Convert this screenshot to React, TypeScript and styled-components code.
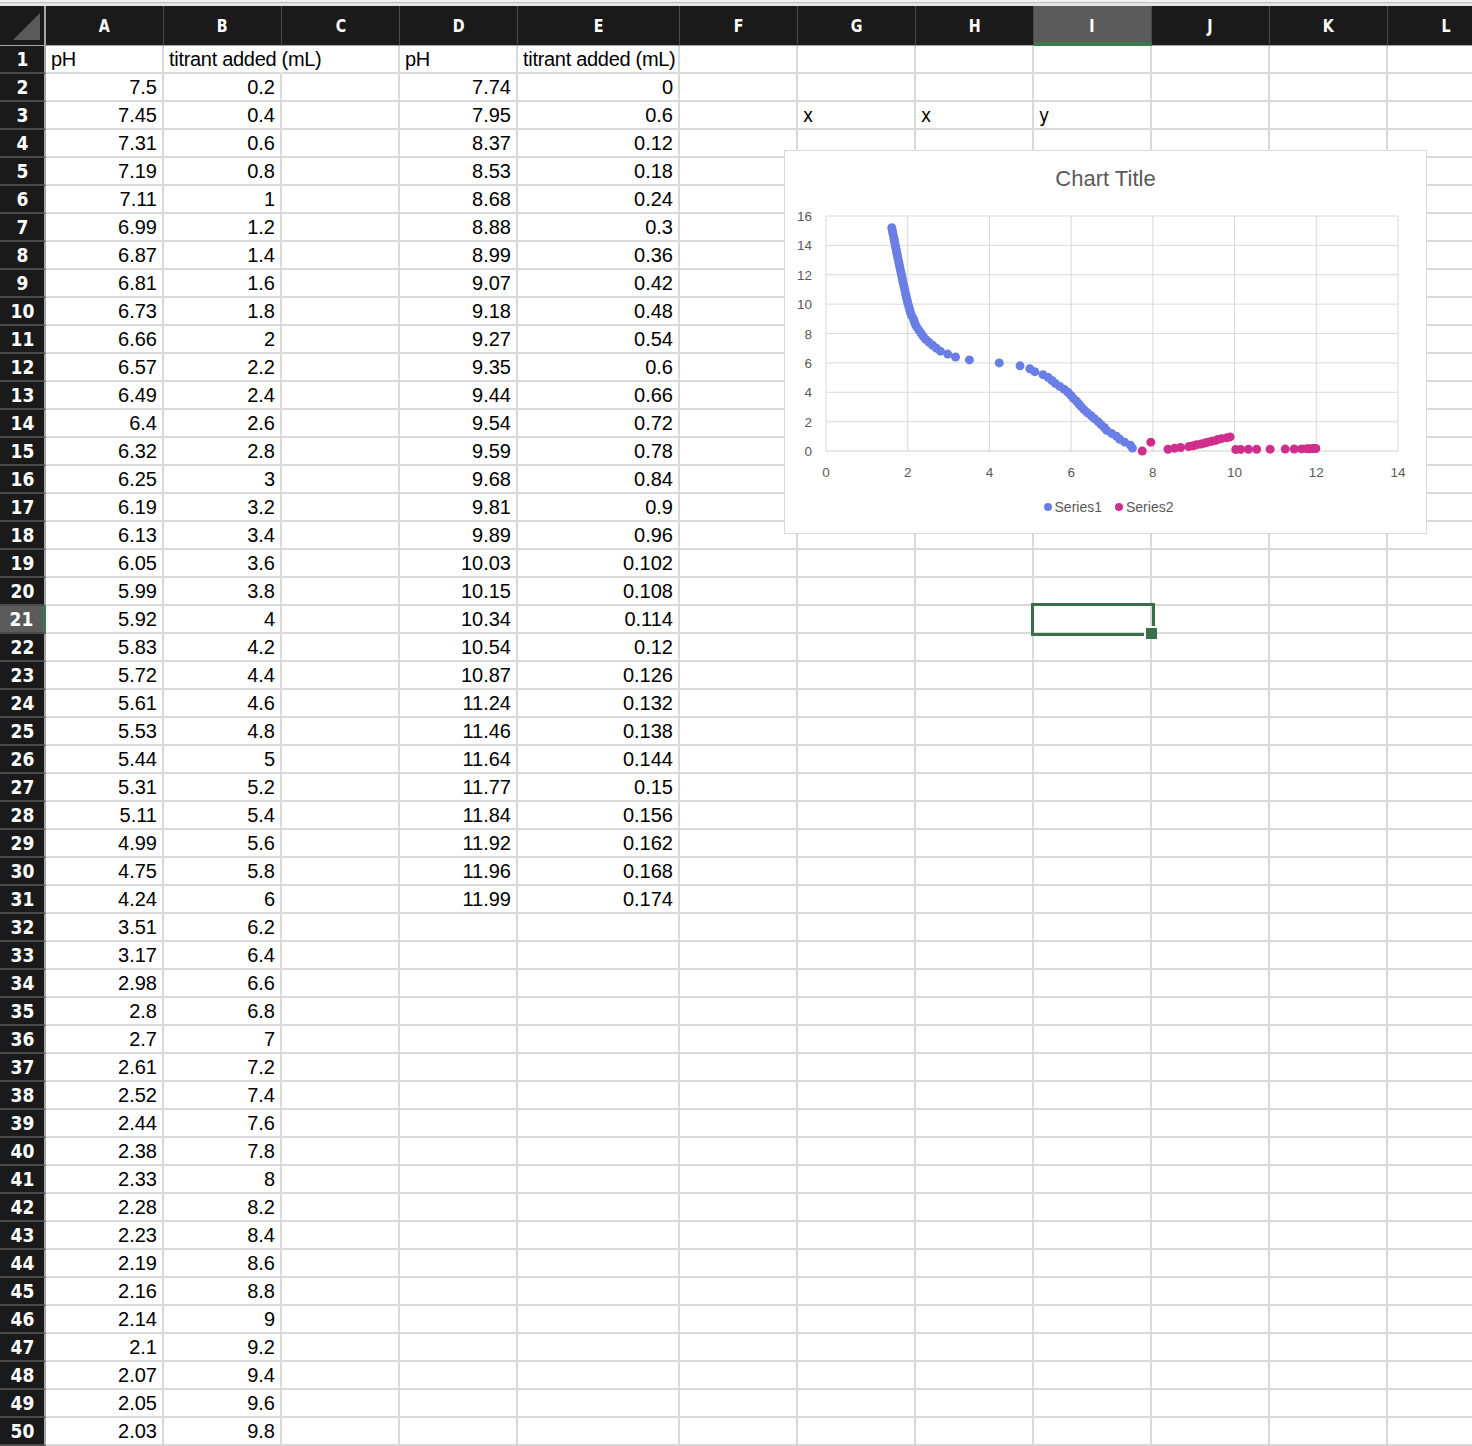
import React from "react";
import styled, { createGlobalStyle } from "styled-components";

const GlobalStyle = createGlobalStyle`
  html, body { margin: 0; padding: 0; background: #ffffff; }
  body { font-family: "Liberation Sans", Arial, sans-serif; overflow: hidden; }
`;

const COLS = ["A", "B", "C", "D", "E", "F", "G", "H", "I", "J", "K", "L"];
const COL_W = [118, 118, 118, 118, 162, 118, 118, 118, 118, 118, 118, 118];
const ROWS = 50;
const SEL_COL = "I";
const SEL_ROW = 21;

const A = [7.5, 7.45, 7.31, 7.19, 7.11, 6.99, 6.87, 6.81, 6.73, 6.66, 6.57, 6.49, 6.4, 6.32, 6.25, 6.19, 6.13, 6.05, 5.99, 5.92, 5.83, 5.72, 5.61, 5.53, 5.44, 5.31, 5.11, 4.99, 4.75, 4.24, 3.51, 3.17, 2.98, 2.8, 2.7, 2.61, 2.52, 2.44, 2.38, 2.33, 2.28, 2.23, 2.19, 2.16, 2.14, 2.1, 2.07, 2.05, 2.03];
const B = A.map((_, i) => Math.round((i + 1) * 2) / 10);
const D = [7.74, 7.95, 8.37, 8.53, 8.68, 8.88, 8.99, 9.07, 9.18, 9.27, 9.35, 9.44, 9.54, 9.59, 9.68, 9.81, 9.89, 10.03, 10.15, 10.34, 10.54, 10.87, 11.24, 11.46, 11.64, 11.77, 11.84, 11.92, 11.96, 11.99];
const E = [0, 0.6, 0.12, 0.18, 0.24, 0.3, 0.36, 0.42, 0.48, 0.54, 0.6, 0.66, 0.72, 0.78, 0.84, 0.9, 0.96, 0.102, 0.108, 0.114, 0.12, 0.126, 0.132, 0.138, 0.144, 0.15, 0.156, 0.162, 0.168, 0.174];

type CellVal = { text: string; align: "left" | "right"; narrow?: boolean; overflow?: boolean; label?: boolean };

const cells: Record<string, CellVal> = {};
cells["A1"] = { text: "pH", align: "left", label: true };
cells["B1"] = { text: "titrant added (mL)", align: "left", overflow: true, label: true };
cells["D1"] = { text: "pH", align: "left", label: true };
cells["E1"] = { text: "titrant added (mL)", align: "left", label: true };
A.forEach((v, i) => (cells[`A${i + 2}`] = { text: String(v), align: "right" }));
B.forEach((v, i) => (cells[`B${i + 2}`] = { text: String(v), align: "right" }));
D.forEach((v, i) => (cells[`D${i + 2}`] = { text: String(v), align: "right" }));
E.forEach((v, i) => (cells[`E${i + 2}`] = { text: String(v), align: "right" }));
cells["G3"] = { text: "x", align: "left", narrow: true };
cells["H3"] = { text: "x", align: "left", narrow: true };
cells["I3"] = { text: "y", align: "left", narrow: true };

// Series data for the chart
const series1: [number, number][] = A.map((x, i) => [x, B[i]]);
for (let k = 1; k <= 27; k++) {
  const y = 9.8 + k * 0.2;
  const t = k / 27;
  const x = 2.03 - 0.42 * Math.pow(t, 0.92);
  series1.push([x, y]);
}
const series2: [number, number][] = D.map((x, i) => [x, E[i]]);

const HEADER_FONT = `"Liberation Sans Narrow", "DejaVu Sans Condensed", "Liberation Sans", Arial, sans-serif`;

const Page = styled.div`
  position: relative;
  width: 1472px;
  height: 1446px;
  overflow: hidden;
  background: #ffffff;
`;

const TopStrip = styled.div`
  height: 6px;
  background: #e4e4e4;
  border-top: 2px solid #f2f2f2;
  box-sizing: border-box;
  box-shadow: inset 0 1px 0 #bdbdbd;
`;

const Sheet = styled.div`
  display: grid;
  grid-template-columns: 46px ${COL_W.map((w) => `${w}px`).join(" ")};
  grid-template-rows: 40px repeat(${ROWS}, 28px);
  width: max-content;
`;

const Corner = styled.div`
  background: #1a1a1a;
  border-right: 2px solid #a6a6a6;
  border-bottom: 1px solid #a6a6a6;
  box-sizing: border-box;
  display: flex;
  align-items: flex-end;
  justify-content: flex-end;
  padding: 0 4px 5px 0;
`;

const ColHeader = styled.div<{ $selected?: boolean }>`
  box-sizing: border-box;
  background: ${(p) => (p.$selected ? "#5b5b5b" : "#1a1a1a")};
  color: #ffffff;
  font-family: ${HEADER_FONT};
  font-weight: bold;
  font-size: 18px;
  display: flex;
  align-items: center;
  justify-content: center;
  border-right: 1px solid #4a4a4a;
  border-bottom: ${(p) => (p.$selected ? "4px solid #3c7a4c" : "1px solid #a6a6a6")};
  padding-top: ${(p) => (p.$selected ? "3px" : "0")};
`;

const HeaderLetter = styled.span`
  display: inline-block;
  transform: scaleX(0.88);
`;

const RowHeader = styled.div<{ $selected?: boolean }>`
  box-sizing: border-box;
  background: ${(p) => (p.$selected ? "#5b5b5b" : "#1a1a1a")};
  color: #ffffff;
  font-family: ${HEADER_FONT};
  font-weight: bold;
  font-size: 19px;
  display: flex;
  align-items: center;
  justify-content: center;
  border-bottom: 2px solid #4a4a4a;
  border-right: ${(p) => (p.$selected ? "3px solid #3c7a4c" : "2px solid #a6a6a6")};
  padding-left: ${(p) => (p.$selected ? "0" : "1px")};
`;

const Cell = styled.div<{ $align: "left" | "right"; $narrow?: boolean; $overflow?: boolean; $label?: boolean }>`
  box-sizing: border-box;
  position: relative;
  border-right: ${(p) => (p.$overflow ? "2px solid transparent" : "2px solid #d9d9d9")};
  border-bottom: 2px solid #d9d9d9;
  padding: 0 5px 0 5px;
  font-size: ${(p) => (p.$narrow ? "19px" : "20px")};
  font-family: ${(p) => (p.$narrow ? HEADER_FONT : `"Liberation Sans", Arial, sans-serif`)};
  letter-spacing: ${(p) => (p.$label ? "-0.3px" : "0")};
  color: #000000;
  line-height: 26px;
  white-space: nowrap;
  text-align: ${(p) => p.$align};
  overflow: ${(p) => (p.$overflow ? "visible" : "hidden")};
  z-index: ${(p) => (p.$overflow ? 1 : 0)};
`;

const SelectedCell = styled(Cell)`
  z-index: 3;
  overflow: visible;
  &::after {
    content: "";
    position: absolute;
    left: -3px;
    top: -3px;
    right: -5px;
    bottom: -4px;
    border: 3px solid #3a7049;
    pointer-events: none;
  }
`;

const FillHandle = styled.span`
  position: absolute;
  left: 110px;
  top: 20px;
  width: 11px;
  height: 11px;
  background: #3a7049;
  border-left: 2px solid #ffffff;
  border-top: 2px solid #ffffff;
  z-index: 4;
`;

const ChartBox = styled.div`
  position: absolute;
  left: 784px;
  top: 150px;
  width: 643px;
  height: 384px;
  box-sizing: border-box;
  background: #ffffff;
  border: 1px solid #d9d9d9;
  display: flex;
  flex-direction: column;
  align-items: stretch;
  z-index: 5;
  font-family: "Liberation Sans", Arial, sans-serif;
`;

const ChartTitle = styled.div`
  margin-top: 13px;
  height: 30px;
  line-height: 30px;
  text-align: center;
  font-size: 22px;
  color: #595959;
`;

const PlotSvg = styled.svg`
  display: block;
  width: 641px;
  height: 296px;
`;

const Legend = styled.div`
  margin-top: 7px;
  height: 20px;
  display: flex;
  justify-content: center;
  align-items: center;
  gap: 13px;
  padding-left: 6px;
`;

const LegendItem = styled.div`
  display: flex;
  align-items: center;
  gap: 3px;
  font-size: 14px;
  color: #595959;
`;

const LegendDot = styled.span<{ $color: string }>`
  width: 8px;
  height: 8px;
  border-radius: 50%;
  background: ${(p) => p.$color};
`;

const BLUE = "#6a7fe6";
const PINK = "#d02e8c";

const PX0 = 41;
const PX1 = 613;
const PY0 = 22;
const PY1 = 257;
const xs = (v: number) => PX0 + (v * (PX1 - PX0)) / 14;
const ys = (v: number) => PY1 - (v * (PY1 - PY0)) / 16;

function Plot() {
  const xt = [0, 2, 4, 6, 8, 10, 12, 14];
  const yt = [0, 2, 4, 6, 8, 10, 12, 14, 16];
  return (
    <PlotSvg viewBox="0 0 641 296">
      {xt.map((v) => (
        <line key={`vx${v}`} x1={xs(v)} x2={xs(v)} y1={PY0} y2={PY1} stroke="#d9d9d9" strokeWidth={1} />
      ))}
      {yt.map((v) => (
        <line key={`hy${v}`} x1={PX0} x2={PX1} y1={ys(v)} y2={ys(v)} stroke={v === 0 ? "#cfcfcf" : "#d9d9d9"} strokeWidth={1} />
      ))}
      {yt.map((v) => (
        <text key={`ly${v}`} x={27} y={ys(v) + 5} textAnchor="end" fontSize={13.5} fill="#595959" fontFamily="Liberation Sans, Arial, sans-serif">
          {v}
        </text>
      ))}
      {xt.map((v) => (
        <text key={`lx${v}`} x={xs(v)} y={283} textAnchor="middle" fontSize={13.5} fill="#595959" fontFamily="Liberation Sans, Arial, sans-serif">
          {v}
        </text>
      ))}
      {series1.map(([x, y], i) => (
        <circle key={`s1${i}`} cx={xs(x)} cy={ys(y)} r={4.5} fill={BLUE} />
      ))}
      {series2.map(([x, y], i) => (
        <circle key={`s2${i}`} cx={xs(x)} cy={ys(y)} r={4.5} fill={PINK} />
      ))}
    </PlotSvg>
  );
}

function Chart() {
  return (
    <ChartBox>
      <ChartTitle>Chart Title</ChartTitle>
      <Plot />
      <Legend>
        <LegendItem>
          <LegendDot $color={BLUE} />
          Series1
        </LegendItem>
        <LegendItem>
          <LegendDot $color={PINK} />
          Series2
        </LegendItem>
      </Legend>
    </ChartBox>
  );
}

export default function App() {
  const rows = Array.from({ length: ROWS }, (_, i) => i + 1);
  return (
    <Page>
      <GlobalStyle />
      <TopStrip />
      <Sheet>
        <Corner>
          <svg width="27" height="27" viewBox="0 0 27 27">
            <polygon points="0,27 27,0 27,27" fill="#5a5a5a" />
          </svg>
        </Corner>
        {COLS.map((c) => (
          <ColHeader key={c} $selected={c === SEL_COL}>
            <HeaderLetter>{c}</HeaderLetter>
          </ColHeader>
        ))}
        {rows.map((r) => (
          <React.Fragment key={r}>
            <RowHeader $selected={r === SEL_ROW}>{r}</RowHeader>
            {COLS.map((c) => {
              const v = cells[`${c}${r}`];
              if (c === SEL_COL && r === SEL_ROW) {
                return (
                  <SelectedCell key={c} $align="left">
                    <FillHandle />
                  </SelectedCell>
                );
              }
              return (
                <Cell key={c} $align={v ? v.align : "left"} $narrow={v?.narrow} $overflow={v?.overflow} $label={v?.label}>
                  {v ? v.text : ""}
                </Cell>
              );
            })}
          </React.Fragment>
        ))}
      </Sheet>
      <Chart />
    </Page>
  );
}
